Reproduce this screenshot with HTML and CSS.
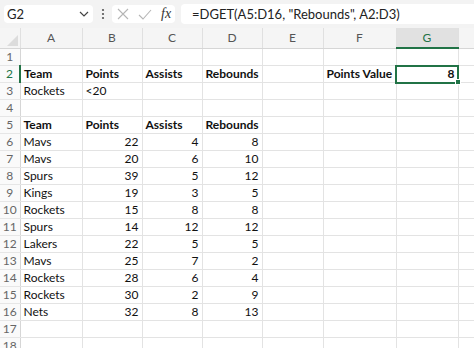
FILE: index.html
```html
<!DOCTYPE html>
<html lang="en">

<head>
    <meta charset="UTF-8">
    <meta name="viewport" content="width=device-width, initial-scale=1.0">
    <title>DGET Example</title>
    <link rel="stylesheet" href="styles.css">
</head>

<body>
    <div class="toolbar">
        <div class="namebox">
            <span>G2</span>
            <svg class="chevron" width="10" height="6" viewBox="0 0 10 6">
                <path d="M1 1 L5 5 L9 1" fill="none" stroke="#444" stroke-width="1.2" />
            </svg>
        </div>
        <div class="dots">
            <svg width="4" height="12" viewBox="0 0 4 12">
                <circle cx="2" cy="2" r="1.1" fill="#555" />
                <circle cx="2" cy="6" r="1.1" fill="#555" />
                <circle cx="2" cy="10" r="1.1" fill="#555" />
            </svg>
        </div>
        <div class="fnbox">
            <svg width="12" height="12" viewBox="0 0 12 12">
                <path d="M1 1 L11 11 M11 1 L1 11" stroke="#b5b5b5" stroke-width="1.1" />
            </svg>
            <svg width="14" height="11" viewBox="0 0 14 11">
                <path d="M1 6 L5 10 L13 1" fill="none" stroke="#b5b5b5" stroke-width="1.1" />
            </svg>
            <span class="fx">fx</span>
        </div>
        <div class="formula">=DGET(A5:D16, "Rebounds", A2:D3)</div>
    </div>

    <div class="grid-wrap">
        <table class="sheet">
            <colgroup>
                <col class="c-row">
                <col class="c-a">
                <col class="c-b">
                <col class="c-c">
                <col class="c-d">
                <col class="c-e">
                <col class="c-f">
                <col class="c-g">
                <col class="c-h">
            </colgroup>
            <thead>
                <tr>
                    <th class="corner"></th>
                    <th>A</th>
                    <th>B</th>
                    <th>C</th>
                    <th>D</th>
                    <th>E</th>
                    <th>F</th>
                    <th class="active">G</th>
                    <th></th>
                </tr>
            </thead>
            <tbody id="rows">

            </tbody>
        </table>
    </div>

    <script>
        // sheet contents, one array per row (A..H)
        const data = [
            [],
            ['Team', 'Points', 'Assists', 'Rebounds', '', 'Points Value', 8],
            ['Rockets', '<20'],
            [],
            ['Team', 'Points', 'Assists', 'Rebounds'],
            ['Mavs', 22, 4, 8],
            ['Mavs', 20, 6, 10],
            ['Spurs', 39, 5, 12],
            ['Kings', 19, 3, 5],
            ['Rockets', 15, 8, 8],
            ['Spurs', 14, 12, 12],
            ['Lakers', 22, 5, 5],
            ['Mavs', 25, 7, 2],
            ['Rockets', 28, 6, 4],
            ['Rockets', 30, 2, 9],
            ['Nets', 32, 8, 13],
            [],
            []
        ]
        const bold = [2, 5]

        const rows = document.getElementById('rows')

        data.forEach((cells, i) => {
            const n = i + 1
            const row = document.createElement('tr')
            let html = `<th class="${n === 2 ? 'active' : ''}">${n}</th>`
            for (let c = 0; c < 8; c++) {
                const v = cells[c] === undefined ? '' : cells[c]
                let cls = typeof v === 'number' ? 'num' : ''
                if (bold.includes(n) && v !== '') cls += ' bold'
                if (n === 2 && c === 6) cls += ' selected'
                const text = String(v).replace('<', '&lt;')
                html += `<td class="${cls}">${text}</td>`
            }
            row.innerHTML = html
            rows.appendChild(row)
        })
    </script>
</body>

</html>
```

FILE: styles.css
```css
body {
    margin: 0;
    font-family: Lato, "Open Sans", sans-serif;
    background-color: #fff;
    overflow: hidden;
}

.toolbar {
    height: 28px;
    display: flex;
    align-items: center;
    padding: 0 0 0 4px;
    background-color: #f3f3f3;
    box-sizing: border-box;
}

.namebox {
    width: 89px;
    height: 18px;
    display: flex;
    align-items: center;
    justify-content: space-between;
    padding: 0 4px 0 3px;
    background-color: #fff;
    border-radius: 4px;
    box-sizing: border-box;
    font-size: 13px;
    color: #222;
}

.dots {
    width: 19px;
    display: flex;
    justify-content: center;
}

.fnbox {
    width: 63px;
    height: 18px;
    display: flex;
    align-items: center;
    gap: 9px;
    padding-left: 5px;
    background-color: #fff;
    border-radius: 4px;
    box-sizing: border-box;
}

.fx {
    font-family: "Liberation Serif", serif;
    font-style: italic;
    font-size: 14px;
    color: #333;
}

.formula {
    flex: 1;
    height: 20px;
    margin-left: 6px;
    padding-left: 11px;
    background-color: #fff;
    border-radius: 4px 0 0 4px;
    font-size: 13px;
    line-height: 20px;
    color: #222;
}

.grid-wrap {
    height: 320px;
    overflow: hidden;
}

.sheet {
    border-collapse: collapse;
    table-layout: fixed;
    width: 474px;
    font-size: 12px;
}

.c-row { width: 20px; }
.c-a { width: 62px; }
.c-b { width: 60px; }
.c-c { width: 60px; }
.c-d { width: 60px; }
.c-e { width: 61px; }
.c-f { width: 73px; }
.c-g { width: 62px; }
.c-h { width: 16px; }

thead th {
    height: 20px;
    padding: 0;
    background-color: #f5f5f5;
    border-right: 1px solid #e0e0e0;
    border-bottom: 1px solid #d6d6d6;
    font-weight: normal;
    font-size: 12px;
    color: #555;
    box-sizing: border-box;
}

thead th.active {
    background-color: #e1e1e1;
    border-bottom: 2px solid #217346;
    color: #217346;
}

th.corner {
    position: relative;
}

th.corner::after {
    content: "";
    position: absolute;
    right: 2px;
    bottom: 2px;
    border-left: 11px solid transparent;
    border-bottom: 11px solid #dcdcdc;
}

tbody th {
    height: 16px;
    padding: 0;
    background-color: #fafafa;
    border-right: 1px solid #d6d6d6;
    border-bottom: 1px solid #e6e6e6;
    font-weight: normal;
    font-size: 12px;
    line-height: 16px;
    color: #666;
    text-align: center;
}

tbody th.active {
    border-right: 2px solid #217346;
    color: #217346;
}

td {
    height: 16px;
    padding: 0 3px;
    border-right: 1px solid #e3e3e3;
    border-bottom: 1px solid #e3e3e3;
    color: #111;
    white-space: nowrap;
    overflow: hidden;
    line-height: 16px;
}

td.num {
    text-align: right;
}

td.bold {
    font-weight: bold;
}

td.selected {
    position: relative;
    overflow: visible;
    outline: 2px solid #217346;
    outline-offset: -1px;
}

td.selected::after {
    content: "";
    position: absolute;
    right: -3px;
    bottom: -3px;
    width: 4px;
    height: 4px;
    background-color: #217346;
    border: 1px solid #fff;
}
```
